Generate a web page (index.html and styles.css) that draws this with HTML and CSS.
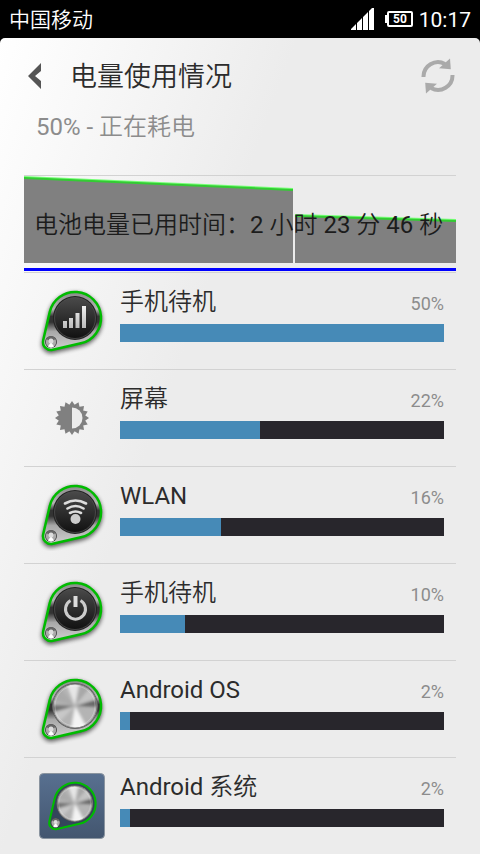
FILE: index.html
```html
<!DOCTYPE html>
<html lang="zh-CN">
<head>
<meta charset="utf-8">
<meta name="viewport" content="width=device-width, initial-scale=1">
<title>电量使用情况</title>
<link rel="stylesheet" href="styles.css">
</head>
<body>
<svg class="defs" width="0" height="0" aria-hidden="true">
  <defs>
    <linearGradient id="metal" x1="0" y1="0" x2="0" y2="1">
      <stop offset="0" stop-color="#8a8a8a"/><stop offset=".3" stop-color="#b5b5b5"/>
      <stop offset=".42" stop-color="#333"/><stop offset=".52" stop-color="#333"/>
      <stop offset=".68" stop-color="#a8a8a8"/><stop offset="1" stop-color="#d0d0d0"/>
    </linearGradient>
    <linearGradient id="dark" x1="0" y1="0" x2="0" y2="1">
      <stop offset="0" stop-color="#4a4a4a"/><stop offset="1" stop-color="#111"/>
    </linearGradient>
    <linearGradient id="glyph" x1="0" y1="0" x2="0" y2="1">
      <stop offset="0" stop-color="#f0f0f0"/><stop offset="1" stop-color="#bbb"/>
    </linearGradient>
    <linearGradient id="tile" x1="0" y1="0" x2="0" y2="1">
      <stop offset="0" stop-color="#587090"/><stop offset="1" stop-color="#43566f"/>
    </linearGradient>
    <filter id="shadow" x="-20%" y="-20%" width="140%" height="140%"><feGaussianBlur stdDeviation="2"/></filter>
    <filter id="soft"><feGaussianBlur stdDeviation="1.8"/></filter>
    <clipPath id="disc"><circle cx="39" cy="33" r="22"/></clipPath>
    <g id="sheen">
      <circle cx="39" cy="33" r="23" fill="#555"/>
      <g clip-path="url(#disc)">
        <rect x="15" y="9" width="48" height="48" fill="#b4b4b4"/>
        <g filter="url(#soft)">
          <path d="M39 33L28 5H44Z" fill="#e6e6e6"/>
          <path d="M39 33L46 5L58 10Z" fill="#a8a8a8"/>
          <path d="M39 33L58 10L66 22Z" fill="#c4c4c4"/>
          <path d="M39 33L68 25V34Z" fill="#666"/>
          <path d="M39 33L66 40L56 58Z" fill="#b4b4b4"/>
          <path d="M39 33L54 60L34 61Z" fill="#f3f3f3"/>
          <path d="M39 33L32 60L18 54Z" fill="#b4b4b4"/>
          <path d="M39 33L18 54L10 42Z" fill="#c8c8c8"/>
          <path d="M39 33L10 41V32Z" fill="#707070"/>
          <path d="M39 33L10 25L20 10Z" fill="#aaa"/>
        </g>
      </g>
      <circle cx="39" cy="33" r="22" fill="none" stroke="#777" stroke-width="1"/>
      <circle cx="39" cy="33" r="20" fill="none" stroke="#fff" stroke-opacity=".25" stroke-width="1"/>
    </g>
    <g id="rivet">
      <circle cx="15" cy="57" r="6" fill="#444"/>
      <circle cx="15" cy="57" r="5.200" fill="#aaa"/>
      <path d="M15 57L10.500 54A5 5 0 0 1 19.500 54Z" fill="#666"/>
      <path d="M15 57L12 61.500A5 5 0 0 0 18 61.500Z" fill="#fff"/>
      <circle cx="15" cy="56" r="2.500" fill="#ddd"/>
    </g>
    <path id="belt" d="M7.200 55.200L13.700 27.150A26 26 0 1 1 44.850 58.300L16.800 64.800A8 8 0 0 1 7.200 55.200Z"/>
    <g id="plate">
      <use href="#belt" y="2" fill="#000" stroke="#000" stroke-width="3" opacity=".6" filter="url(#shadow)"/>
      <use href="#belt" fill="url(#metal)"/>
      <use href="#rivet"/>
      <use href="#belt" fill="none" stroke="#0b0" stroke-width="2.500"/>
    </g>
    <g id="knob">
      <use href="#plate"/>
      <circle cx="39" cy="33" r="22" fill="#222"/>
      <circle cx="39" cy="33" r="20.500" fill="url(#dark)" stroke="#555" stroke-width=".7"/>
    </g>
  </defs>
</svg>

<header class="status">
  <span class="carrier">中国移动</span>
  <svg class="signal" viewBox="0 0 24 22" aria-hidden="true"><path fill="#fff" d="M0 22V21L5 16V22ZM6 22V15L11 10V22ZM12 22V9L17 4V22ZM18 22V3L21 0H23V22Z"/></svg>
  <svg class="battery" viewBox="0 0 28 16" aria-hidden="true">
    <path fill="#fff" d="M0 4H2V12H0Z"/><rect x="3" y="1" width="24" height="14" rx="1" fill="none" stroke="#fff" stroke-width="2"/>
    <text class="level" x="15" y="12" text-anchor="middle">50</text>
  </svg>
  <time class="clock">10:17</time>
</header>

<main class="panel">
  <div class="titlebar">
    <button class="icon-button back" type="button" aria-label="返回"><svg viewBox="0 0 14 26" width="14" height="26"><path d="M13 0V8L7 13L13 18V26L0 13Z" fill="#555"/></svg></button>
    <h1 class="title">电量使用情况</h1>
    <button class="icon-button refresh" type="button" aria-label="刷新"><svg viewBox="0 0 36 36" width="36" height="36"><g id="turn"><path d="M3.500 19A14.500 14.500 0 0 1 25 5.900" fill="none" stroke="#aaa" stroke-width="4"/><path d="M30 .5L30.800 11.300L19 10.300Z" fill="#aaa"/></g><use href="#turn" transform="rotate(180 18 18)"/></svg></button>
  </div>
  <p class="state"><span class="latin">50% - </span>正在耗电</p>

  <section class="history">
    <svg class="chart" viewBox="0 0 432 96" preserveAspectRatio="none" aria-hidden="true">
      <path d="M0 1L269 13V87H0ZM271 39L432 44V87H271Z" fill="#808080"/>
      <path d="M0 1L269 13M271 39L432 44" fill="none" stroke="#7f7" stroke-width="2"/>
      <path d="M0 2L269 14M271 40L432 45" fill="none" stroke="#3c3" stroke-width="2"/>
      <path d="M0 92H432V95H0Z" fill="#00f"/>
    </svg>
    <p class="elapsed">电池电量已用时间：<span class="latin">2 </span>小时<span class="latin"> 23 </span>分<span class="latin"> 46 </span>秒</p>
  </section>

  <ul class="usage">
    <li class="item">
      <svg class="icon" viewBox="0 0 72 72" aria-hidden="true"><use href="#knob"/><path fill="url(#glyph)" d="M27 36h4v7h-4zM33 33h4v10h-4zM39.500 28h4v15h-4zM46 21h4v22h-4z"/></svg>
      <div class="detail"><div class="line"><span class="name">手机待机</span><span class="percent">50%</span></div><div class="bar"><div class="fill" style="width:100%"></div></div></div>
    </li>
    <li class="item">
      <svg class="icon" viewBox="0 0 72 72" aria-hidden="true">
        <g fill="#808080"><circle cx="36" cy="36" r="13"/>
          <g id="rays"><path id="ray" d="M32.500 24L36 19L39.500 24V48L36 53L32.500 48Z"/><use href="#ray" transform="rotate(22.500 36 36)"/><use href="#ray" transform="rotate(45 36 36)"/><use href="#ray" transform="rotate(67.500 36 36)"/></g>
          <use href="#rays" transform="rotate(90 36 36)"/></g>
        <path d="M36 25.500A10.500 10.500 0 0 1 36 46.500Z" fill="#ececec"/>
      </svg>
      <div class="detail"><div class="line"><span class="name">屏幕</span><span class="percent">22%</span></div><div class="bar"><div class="fill" style="width:43.200%"></div></div></div>
    </li>
    <li class="item">
      <svg class="icon" viewBox="0 0 72 72" aria-hidden="true"><use href="#knob"/><circle cx="39.500" cy="40" r="5" fill="#ccc"/><path d="M29 24.500Q39.500 18.500 50 24.500M31.500 29.500Q39.500 24.500 47.500 29.500M34 34Q39.500 31 45 34" fill="none" stroke="#ddd" stroke-width="2.600" stroke-linecap="round"/></svg>
      <div class="detail"><div class="line"><span class="name latin">WLAN</span><span class="percent">16%</span></div><div class="bar"><div class="fill" style="width:31.200%"></div></div></div>
    </li>
    <li class="item">
      <svg class="icon" viewBox="0 0 72 72" aria-hidden="true"><use href="#knob"/><path d="M34.500 24.500A10 10 0 1 0 44.500 24.500" fill="none" stroke="#ccc" stroke-width="3"/><path d="M39.500 20V31" stroke="#ddd" stroke-width="4" fill="none"/></svg>
      <div class="detail"><div class="line"><span class="name">手机待机</span><span class="percent">10%</span></div><div class="bar"><div class="fill" style="width:20%"></div></div></div>
    </li>
    <li class="item">
      <svg class="icon" viewBox="0 0 72 72" aria-hidden="true"><use href="#plate"/><use href="#sheen"/></svg>
      <div class="detail"><div class="line"><span class="name latin">Android OS</span><span class="percent">2%</span></div><div class="bar"><div class="fill" style="width:3%"></div></div></div>
    </li>
    <li class="item">
      <svg class="icon" viewBox="0 0 72 72" aria-hidden="true"><rect x="3.500" y="3.500" width="65" height="65" rx="4" fill="url(#tile)" stroke="#8a949f"/>
        <g transform="translate(7.600 7.200) scale(.8)"><use href="#belt" fill="#34455b"/><use href="#rivet"/><use href="#sheen"/><use href="#belt" fill="none" stroke="#0b0" stroke-width="2.600"/></g></svg>
      <div class="detail"><div class="line"><span class="name"><span class="latin">Android </span>系统</span><span class="percent">2%</span></div><div class="bar"><div class="fill" style="width:3%"></div></div></div>
    </li>
  </ul>
</main>
</body>
</html>
```
FILE: styles.css
```css
* { box-sizing: border-box; }

body {
  margin: 0;
  min-height: 100vh;
  display: flex;
  flex-direction: column;
  background: #000;
  color: #2c2c2c;
  font-family: Roboto, "Noto Sans CJK SC", sans-serif;
  font-weight: 350;
}

h1, p, ul { margin: 0; padding: 0; }

.defs { position: absolute; }

.latin { font-weight: 400; }

.status {
  display: flex;
  align-items: center;
  height: 38px;
  padding: 0 9px;
  color: #fff;
}

.carrier {
  flex: 1;
  padding-bottom: 2px;
  font-size: 21px;
}

.signal { width: 24px; height: 22px; margin-right: 10px; }
.battery { width: 28px; height: 16px; margin-right: 6px; }
.level { fill: #fff; font-size: 12px; font-weight: 700; }
.clock { padding-top: 2px; font-size: 21px; font-weight: 400; }

.panel {
  flex: 1;
  padding: 0 24px;
  border-radius: 5px 5px 0 0;
  background: linear-gradient(110deg, #fff 0, #ececec 280px);
}

.titlebar {
  display: flex;
  align-items: center;
  height: 76px;
}

.title {
  flex: 1;
  padding-top: 2px;
  font-size: 27px;
  font-weight: 350;
  line-height: 36px;
}

.icon-button {
  display: flex;
  padding: 0;
  border: 0;
  background: none;
}

.back { padding: 0 28px 0 4px; }

.state {
  padding: 0 12px 34px;
  color: #8c8c8c;
  font-size: 24px;
  line-height: 27px;
}

.history {
  position: relative;
  display: flex;
  align-items: center;
  height: 97px;
  border-top: 1px solid #d2d2d2;
}

.chart {
  position: absolute;
  inset: 0;
  width: 100%;
  height: 100%;
}

.elapsed {
  position: relative;
  padding: 2px 0 0 10px;
  color: #1c1c1c;
  font-size: 24px;
  line-height: 28px;
  white-space: nowrap;
}

.usage { list-style: none; }

.item {
  display: flex;
  align-items: center;
  height: 97px;
  padding: 0 12px;
  border-top: 1px solid #d2d2d2;
}

.icon {
  flex: none;
  width: 72px;
  height: 72px;
  margin-right: 12px;
}

.detail {
  flex: 1;
  align-self: flex-start;
  padding-top: 15px;
}

.line {
  display: flex;
  align-items: flex-end;
  justify-content: space-between;
  height: 28px;
  margin-bottom: 8px;
}

.name { font-size: 24px; line-height: 28px; }
.percent { color: #8c8c8c; font-size: 18px; font-weight: 400; line-height: 24px; }

.bar { height: 18px; background: #28262c; }
.fill { height: 100%; background: #468ab7; }
```
